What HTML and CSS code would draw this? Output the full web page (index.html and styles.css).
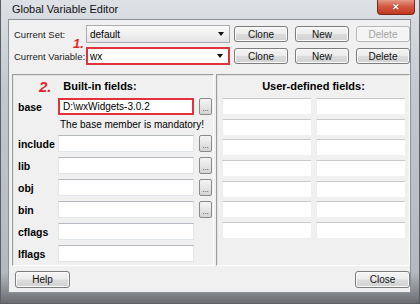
FILE: index.html
```html
<!DOCTYPE html>
<html lang="en">
<head>
  <meta charset="UTF-8" />
  <title>Global Variable Editor</title>
  <link rel="stylesheet" href="styles.css">
</head>
<body>
  <div class="window">
    <div class="titlebar">
      <span class="title">Global Variable Editor</span>
      <div class="close-x">&#x2715;</div>
    </div>

    <div class="client">
      <div class="top-row">
        <span class="top-label">Current Set:</span>
        <div class="combo"><span>default</span><span class="arrow"></span></div>
        <button class="btn">Clone</button>
        <button class="btn">New</button>
        <button class="btn" disabled>Delete</button>
      </div>
      <div class="top-row">
        <span class="top-label">Current Variable:</span>
        <div class="combo marked"><span>wx</span><span class="arrow"></span></div>
        <button class="btn">Clone</button>
        <button class="btn">New</button>
        <button class="btn">Delete</button>
      </div>
      <span class="note note-1">1.</span>

      <div class="panels">
        <div class="panel builtin">
          <div class="panel-title">Built-in fields:</div>
          <span class="note note-2">2.</span>

          <div class="field">
            <span class="field-name">base</span>
            <div class="text-input marked">D:\wxWidgets-3.0.2</div>
            <button class="dots">...</button>
          </div>
          <div class="hint">The base member is mandatory!</div>
          <div class="field">
            <span class="field-name">include</span>
            <div class="text-input"></div>
            <button class="dots">...</button>
          </div>
          <div class="field">
            <span class="field-name">lib</span>
            <div class="text-input"></div>
            <button class="dots">...</button>
          </div>
          <div class="field">
            <span class="field-name">obj</span>
            <div class="text-input"></div>
            <button class="dots">...</button>
          </div>
          <div class="field">
            <span class="field-name">bin</span>
            <div class="text-input"></div>
            <button class="dots">...</button>
          </div>
          <div class="field spaced">
            <span class="field-name">cflags</span>
            <div class="text-input"></div>
          </div>
          <div class="field">
            <span class="field-name">lflags</span>
            <div class="text-input"></div>
          </div>
        </div>

        <div class="panel userdef">
          <div class="panel-title">User-defined fields:</div>
          <div class="user-grid">
            <div class="cell"></div><div class="cell"></div>
            <div class="cell"></div><div class="cell"></div>
            <div class="cell"></div><div class="cell"></div>
            <div class="cell"></div><div class="cell"></div>
            <div class="cell"></div><div class="cell"></div>
            <div class="cell"></div><div class="cell"></div>
            <div class="cell"></div><div class="cell"></div>
          </div>
        </div>
      </div>

      <div class="footer">
        <button class="btn wide">Help</button>
        <button class="btn wide">Close</button>
      </div>
    </div>
  </div>
</body>
</html>
```

FILE: styles.css
```css
html, body {
  margin: 0;
  padding: 0;
}

body {
  font-family: "Liberation Sans", Arial, sans-serif;
  font-size: 10px;
  color: #000;
  background: #fff;
}

.window {
  width: 420px;
  height: 304px;
  box-sizing: border-box;
  display: flex;
  flex-direction: column;
  background: linear-gradient(#dde1e6, #c3c8ce 30%, #b4b9bf 90%, #6a6c6f);
  border: 1px solid #5c5f63;
  border-top: none;
}

.titlebar {
  height: 19px;
  display: flex;
  align-items: flex-start;
  justify-content: space-between;
  padding-left: 11px;
  position: relative;
}

.title {
  font-size: 11px;
  line-height: 19px;
  color: #111;
}

.close-x {
  width: 36px;
  height: 14px;
  margin-right: 4px;
  border: 1px solid #7a2a1c;
  border-top: none;
  border-radius: 0 0 4px 4px;
  background: linear-gradient(#e39a86, #d45a41 45%, #c0391f);
  color: #fff;
  font-size: 9px;
  font-weight: bold;
  line-height: 14px;
  text-align: center;
  text-shadow: 0 0 1px #5a1a10;
}

.client {
  flex: 1;
  margin: 0 8px 10px 7px;
  padding: 5px 0 0 3px;
  background: #f0f0f0;
  border: 1px solid #8d9095;
  position: relative;
  display: flex;
  flex-direction: column;
}

.top-row {
  display: flex;
  align-items: center;
  height: 18px;
  margin-bottom: 4px;
}

.top-label {
  width: 74px;
  flex-shrink: 0;
  padding-left: 2px;
  box-sizing: border-box;
  white-space: nowrap;
  font-size: 9.5px;
  color: #222;
}

.combo {
  width: 144px;
  flex-shrink: 0;
  height: 18px;
  box-sizing: border-box;
  margin-right: 4px;
  border: 1px solid #a9acb1;
  background: linear-gradient(#fbfbfb, #f0f0f0 50%, #e4e4e4);
  display: flex;
  align-items: center;
  justify-content: space-between;
  padding: 0 5px 0 3px;
}

.combo.marked {
  border: 2px solid #e2323b;
  padding-left: 2px;
  background: #fff;
}

.arrow {
  width: 0;
  height: 0;
  border-left: 3px solid transparent;
  border-right: 3px solid transparent;
  border-top: 4px solid #111;
}

.btn {
  font-family: inherit;
  font-size: 10px;
  color: #111;
  width: 54px;
  flex-shrink: 0;
  height: 16px;
  padding: 0;
  margin-right: 7px;
  border: 1px solid #7d7d7d;
  border-radius: 3px;
  background: linear-gradient(#f4f4f4, #ececec 48%, #dcdcdc 52%, #d2d2d2);
  box-shadow: inset 0 0 0 1px #fbfbfb;
}

.btn:last-child {
  margin-right: 0;
}

.btn:disabled {
  color: #a3a3a3;
  border-color: #b5b5b5;
  background: #f4f4f4;
}

.note {
  position: absolute;
  color: #e3262e;
  font-family: "Liberation Sans", sans-serif;
  font-weight: bold;
  font-style: italic;
  font-size: 13px;
}

.note-1 {
  left: 64px;
  top: 16px;
}

.note-2 {
  left: 26px;
  top: 3px;
  font-size: 15px;
}

.panels {
  display: flex;
  gap: 2px;
  height: 192px;
  margin-top: 5px;
}

.panel {
  box-sizing: border-box;
  border: 1px solid #fff;
  border-top-color: #9c9c9c;
  border-left-color: #9c9c9c;
  box-shadow: inset 1px 1px 0 #e2e2e2;
  position: relative;
}

.builtin {
  width: 202px;
  padding: 4px 1px 0 5px;
}

.userdef {
  width: 194px;
  padding: 4px 4px 0 5px;
}

.panel-title {
  font-weight: bold;
  font-size: 11px;
  line-height: 14px;
  text-align: center;
  margin-bottom: 5px;
}

.builtin .panel-title {
  padding-right: 30px;
}

.field {
  display: flex;
  align-items: center;
  height: 17px;
  margin-bottom: 5px;
}

.field.spaced {
  margin-top: 2px;
}

.field-name {
  width: 40px;
  flex-shrink: 0;
  font-weight: bold;
  font-size: 10.5px;
  white-space: nowrap;
  overflow: hidden;
}

.text-input {
  width: 136px;
  flex-shrink: 0;
  height: 17px;
  box-sizing: border-box;
  background: #fff;
  border: 1px solid #e2e6eb;
  border-top-color: #b5b8bd;
  padding-left: 4px;
  line-height: 15px;
}

.text-input.marked {
  border: 2px solid #e2323b;
  line-height: 13px;
  padding-left: 3px;
}

.dots {
  width: 13px;
  flex-shrink: 0;
  height: 17px;
  margin-left: 5px;
  padding: 0;
  border: 1px solid #8a8a8a;
  border-radius: 2px;
  background: linear-gradient(#f4f4f4, #e6e6e6 50%, #d4d4d4);
  font-family: inherit;
  font-size: 8px;
  line-height: 8px;
  padding-top: 5px;
  color: #333;
}

.hint {
  height: 20px;
  line-height: 20px;
  padding-left: 42px;
  margin-top: -5px;
}

.user-grid {
  display: grid;
  grid-template-columns: 89px 89px;
  grid-template-rows: repeat(7, 16px);
  column-gap: 5px;
  row-gap: 4.7px;
}

.cell {
  background: #fff;
  border-top: 1px solid #c9c9c9;
  border-left: 1px solid #ececec;
}

.footer {
  display: flex;
  justify-content: space-between;
  padding: 5px 0 0 3px;
}

.btn.wide {
  width: 55px;
  height: 17px;
}
```
